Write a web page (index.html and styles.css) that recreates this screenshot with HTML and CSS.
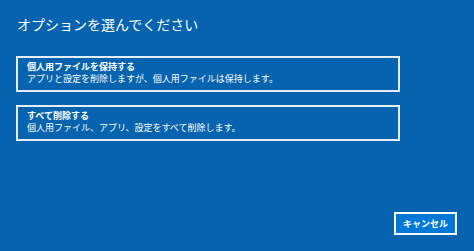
FILE: index.html
```html
<!DOCTYPE html>
<html lang="ja">
<head>
    <meta charset="UTF-8">
    <meta name="viewport" content="width=device-width, initial-scale=1.0">
    <title>オプションを選んでください</title>
    <link rel="stylesheet" href="styles.css">
</head>
<body>
    <div class="screen">
        <h1>オプションを選んでください</h1>
        <div class="options">
            <a href="#" class="option">
                <strong>個人用ファイルを保持する</strong>
                <span>アプリと設定を削除しますが、個人用ファイルは保持します。</span>
            </a>
            <a href="#" class="option">
                <strong>すべて削除する</strong>
                <span>個人用ファイル、アプリ、設定をすべて削除します。</span>
            </a>
        </div>
        <div class="footer">
            <button class="cancel-btn">キャンセル</button>
        </div>
    </div>
</body>
</html>
```

FILE: styles.css
```css
html, body {
    margin: 0;
    height: 100%;
}
body {
    font-family: "Noto Sans CJK JP", "Noto Sans", sans-serif;
    background-color: #0563b0;
    color: #fff;
}
.screen {
    display: flex;
    flex-direction: column;
    height: 100%;
    box-sizing: border-box;
    padding: 14px 17px 16px 16px;
}
h1 {
    margin: 0 0 0 1px;
    font-size: 14px;
    font-weight: normal;
    line-height: 20px;
}
.options {
    display: flex;
    flex-direction: column;
    gap: 13px;
    margin-top: 22px;
    width: 384px;
}
.option {
    display: flex;
    flex-direction: column;
    border: 2px solid #e4ecf4;
    padding: 3px 9px 5px;
    color: #fff;
    text-decoration: none;
    font-size: 9px;
    line-height: 12px;
}
.option strong {
    font-weight: bold;
}
.footer {
    margin-top: auto;
    display: flex;
    justify-content: flex-end;
}
.cancel-btn {
    width: 63px;
    height: 23px;
    background-color: #0078d7;
    border: 2px solid #fff;
    color: #fff;
    font-family: inherit;
    font-size: 9px;
    font-weight: bold;
    line-height: 12px;
    padding: 0;
    cursor: pointer;
}
```
